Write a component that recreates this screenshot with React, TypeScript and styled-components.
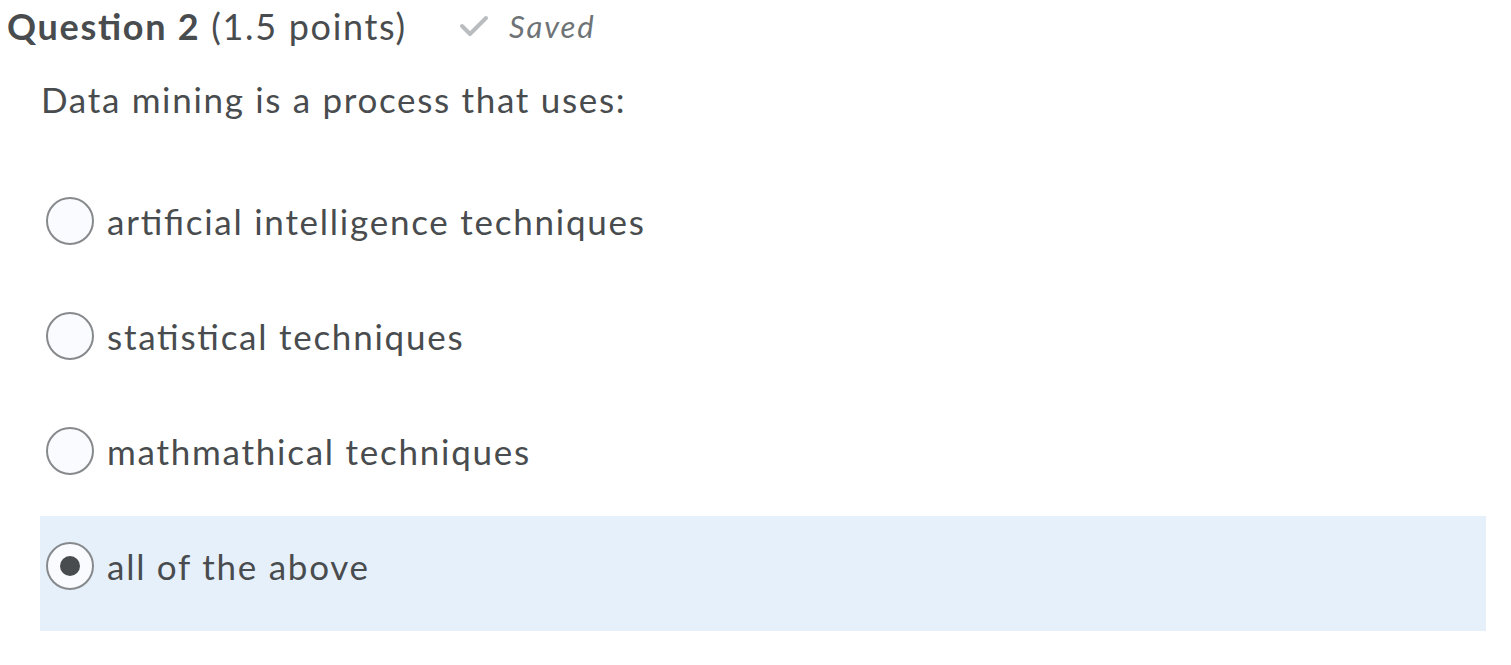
import styled, { createGlobalStyle } from 'styled-components';

const Global = createGlobalStyle`
  body {
    margin: 0;
    background: #ffffff;
    font-family: Lato, "Noto Sans", sans-serif;
    color: #494c4e;
    font-feature-settings: "liga" 1;
    font-variant-ligatures: common-ligatures;
  }
`;

const options = [
  'artificial intelligence techniques',
  'statistical techniques',
  'mathmathical techniques',
  'all of the above',
];

const selected = 3;

const App = () => {
  return (
    <Page>
      <Global />
      <Header>
        <Title>
          <b>Question 2</b> (1.5 points)
        </Title>
        <Status>
          <svg width="30" height="24" viewBox="0 0 30 24">
            <path d="M3 12 L11 20 L27 4" fill="none" stroke="#babdbf" strokeWidth="4" strokeLinecap="round" strokeLinejoin="round" />
          </svg>
          <span>Saved</span>
        </Status>
      </Header>
      <Prompt>Data mining is a process that uses:</Prompt>
      <Options>
        {options.map((o, i) => (
          <Option key={o} $active={i === selected}>
            <Radio $checked={i === selected} />
            <Label>{o}</Label>
          </Option>
        ))}
      </Options>
    </Page>
  );
};

export default App;

const Page = styled.div`
  width: 1511px;
  height: 665px;
`;

const Header = styled.div`
  display: flex;
  align-items: center;
  padding: 4px 0 0 7px;
  height: 44px;
`;

const Title = styled.div`
  font-size: 36px;
  letter-spacing: 0.047em;
  white-space: nowrap;
  b {
    font-weight: 700;
  }
`;

const Status = styled.div`
  display: flex;
  align-items: center;
  margin-left: 52px;
  gap: 20px;
  color: #6e7376;
  font-style: italic;
  font-size: 31px;
  letter-spacing: 0.06em;
  svg {
    display: block;
  }
`;

const Prompt = styled.div`
  margin: 29px 0 0 41px;
  font-size: 35px;
  letter-spacing: 0.048em;
  line-height: 44px;
`;

const Options = styled.div`
  margin: 50px 25px 0 40px;
  display: flex;
  flex-direction: column;
`;

const Option = styled.label<{ $active: boolean }>`
  box-sizing: border-box;
  display: flex;
  align-items: center;
  height: 115px;
  padding: 0 0 15px 6px;
  background: ${(p) => (p.$active ? '#e6f0fa' : 'transparent')};
`;

const Radio = styled.span<{ $checked: boolean }>`
  box-sizing: border-box;
  width: 48px;
  height: 48px;
  border-radius: 50%;
  border: 2px solid #878a8c;
  background: #f9fbff;
  display: flex;
  align-items: center;
  justify-content: center;
  flex-shrink: 0;
  &::after {
    content: '';
    width: 20px;
    height: 20px;
    border-radius: 50%;
    background: #494c4e;
    display: ${(p) => (p.$checked ? 'block' : 'none')};
  }
`;

const Label = styled.span`
  margin-left: 13px;
  font-size: 35px;
  letter-spacing: 0.05em;
`;
